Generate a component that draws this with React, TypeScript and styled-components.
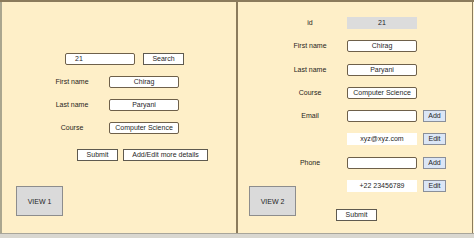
import React from "react";
import styled, { createGlobalStyle } from "styled-components";

const GlobalStyle = createGlobalStyle`
  html, body { margin: 0; padding: 0; background: #d9d7d0; }
  body { font-family: "Liberation Sans", Arial, sans-serif; width: 474px; height: 238px; overflow: hidden; }
  * { box-sizing: border-box; }
`;

const Frame = styled.div`
  display: flex;
  width: 474px;
  height: 234px;
  border-top: 2px solid #8b7b5c;
  border-bottom: 1px solid #a8a59a;
  background: #fff5d8;
`;

const Panel = styled.div<{ $w: number; $left: string; $right: string; $pt: number }>`
  position: relative;
  width: ${(p) => p.$w}px;
  height: 100%;
  background: #feefc8;
  border-left: ${(p) => p.$left};
  border-right: ${(p) => p.$right};
  padding-top: ${(p) => p.$pt}px;
  display: flex;
  flex-direction: column;
  align-items: flex-start;
`;

const Row = styled.div<{ $ml: number; $mt?: number; $gap: number }>`
  display: flex;
  align-items: center;
  gap: ${(p) => p.$gap}px;
  margin-left: ${(p) => p.$ml}px;
  margin-top: ${(p) => p.$mt ?? 0}px;
`;

const FormGrid = styled.div<{ $ml: number; $mt?: number; $rowGap: number }>`
  display: grid;
  grid-template-columns: 54px auto;
  column-gap: 10px;
  row-gap: ${(p) => p.$rowGap}px;
  align-items: center;
  margin-left: ${(p) => p.$ml}px;
  margin-top: ${(p) => p.$mt ?? 0}px;
`;

const Label = styled.span`
  font-size: 7px;
  color: #1f1e1b;
  text-align: center;
  line-height: 12px;
  height: 12px;
`;

const Field = styled.div<{ $align?: string; $variant?: "input" | "readonly" | "plain" }>`
  width: 70px;
  height: 12px;
  font-size: 7px;
  line-height: 10px;
  color: #1f1f1f;
  text-align: ${(p) => p.$align ?? "center"};
  padding-left: ${(p) => (p.$align === "left" ? "9px" : "0")};
  white-space: nowrap;
  border-radius: ${(p) => (p.$variant === "input" || !p.$variant ? "2px" : "0")};
  border: 1px solid
    ${(p) => (p.$variant === "readonly" ? "#dcdcdc" : p.$variant === "plain" ? "#ffffff" : "#6e604a")};
  background: ${(p) => (p.$variant === "readonly" ? "#dcdcdc" : "#ffffff")};
`;

const Button = styled.div<{ $w: number; $tone?: "white" | "blue" }>`
  width: ${(p) => p.$w}px;
  height: 12px;
  font-size: 7px;
  line-height: 10px;
  color: #1f1f1f;
  text-align: center;
  white-space: nowrap;
  border: 1px solid ${(p) => (p.$tone === "blue" ? "#8a8f99" : "#5f5a50")};
  background: ${(p) => (p.$tone === "blue" ? "#dbe6f6" : "#ffffff")};
`;

const FieldGroup = styled.div`
  display: flex;
  align-items: center;
  gap: 6px;
`;

const ViewTag = styled.div<{ $left: number }>`
  position: absolute;
  left: ${(p) => p.$left}px;
  top: 184px;
  width: 47px;
  height: 30px;
  display: flex;
  align-items: center;
  justify-content: center;
  font-size: 7px;
  color: #1f1f1f;
  background: #dadada;
  border: 1.5px solid #8d8d8d;
`;

const details: { label: string; value: string; variant: "input" | "readonly" | "plain"; action?: string }[] = [
  { label: "id", value: "21", variant: "readonly" },
  { label: "First name", value: "Chirag", variant: "input" },
  { label: "Last name", value: "Paryani", variant: "input" },
  { label: "Course", value: "Computer Science", variant: "input" },
  { label: "Email", value: "", variant: "input", action: "Add" },
  { label: "", value: "xyz@xyz.com", variant: "plain", action: "Edit" },
  { label: "Phone", value: "", variant: "input", action: "Add" },
  { label: "", value: "+22 23456789", variant: "plain", action: "Edit" },
];

export default function App() {
  return (
    <>
      <GlobalStyle />
      <Frame>
        <Panel $w={238} $left="2px solid #aaa68f" $right="2px solid #8b7b5c" $pt={51}>
          <Row $ml={63} $gap={8}>
            <Field $align="left">21</Field>
            <Button $w={41}>Search</Button>
          </Row>
          <FormGrid $ml={43} $mt={11} $rowGap={11}>
            <Label>First name</Label>
            <Field>Chirag</Field>
            <Label>Last name</Label>
            <Field>Paryani</Field>
            <Label>Course</Label>
            <Field>Computer Science</Field>
          </FormGrid>
          <Row $ml={75} $mt={15} $gap={5}>
            <Button $w={41}>Submit</Button>
            <Button $w={85}>Add/Edit more details</Button>
          </Row>
          <ViewTag $left={14}>VIEW 1</ViewTag>
        </Panel>
        <Panel $w={235} $left="none" $right="1px solid #8b7b5c" $pt={15}>
          <FormGrid $ml={45} $rowGap={11.3}>
            {details.map((d, i) => (
              <React.Fragment key={i}>
                <Label>{d.label}</Label>
                <FieldGroup>
                  <Field $variant={d.variant}>{d.value}</Field>
                  {d.action && (
                    <Button $w={23} $tone="blue">
                      {d.action}
                    </Button>
                  )}
                </FieldGroup>
              </React.Fragment>
            ))}
          </FormGrid>
          <Row $ml={98} $mt={17} $gap={0}>
            <Button $w={41}>Submit</Button>
          </Row>
          <ViewTag $left={11}>VIEW 2</ViewTag>
        </Panel>
      </Frame>
    </>
  );
}
